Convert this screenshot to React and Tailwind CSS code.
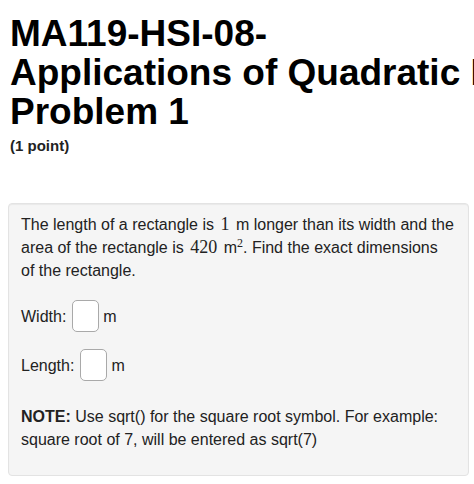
import React from 'react';

const sans = { fontFamily: '"Liberation Sans", Arial, sans-serif' };

function AnswerBox({ className = '' }) {
    return (
        <span className={`block w-[27px] h-[32px] bg-white border border-[#a9a9a9] rounded-[5px] ${className}`} />
    );
}

function MathNum({ children }) {
    return (
        <span className="font-['Liberation_Serif',serif] text-[18px] leading-[18px] mx-[2px]">{children}</span>
    );
}

export default function App() {
    return (
        <div className="w-[474px] h-[484px] overflow-hidden bg-white text-[#222]" style={sans}>
            <div className="pt-[14px] pl-[10px]">
                <h1 className="text-[37px] leading-[39px] font-bold text-black whitespace-nowrap">
                    <div>MA119-HSI-08-</div>
                    <div>Applications of Quadratic Equations</div>
                    <div>Problem 1</div>
                </h1>
                <div className="text-[15px] leading-[20px] font-bold mt-[5px]">(1 point)</div>
            </div>

            <div className="ml-[8px] mr-[5px] mt-[47px] bg-[#f5f5f5] border border-[#e3e3e3] rounded-[4px] shadow-[inset_0_1px_1px_rgba(0,0,0,0.05)] pl-[12px] pr-[4px] pt-[9px] pb-[24px] text-[16px] leading-[23px]">
                <p className="whitespace-nowrap">
                    The length of a rectangle is <MathNum>1</MathNum> m longer than its width and the
                    <br />
                    area of the rectangle is <MathNum>420</MathNum> m<sup className="font-['Liberation_Serif',serif] text-[12px]">2</sup>. Find the exact dimensions
                    <br />
                    of the rectangle.
                </p>

                <div className="flex items-center mt-[18px]">
                    <span>Width:</span>
                    <AnswerBox className="ml-[6px]" />
                    <span className="ml-[4px]">m</span>
                </div>

                <div className="flex items-center mt-[17px]">
                    <span>Length:</span>
                    <AnswerBox className="ml-[6px]" />
                    <span className="ml-[4px]">m</span>
                </div>

                <p className="mt-[24px] whitespace-nowrap">
                    <b>NOTE:</b> Use sqrt() for the square root symbol. For example:
                    <br />
                    square root of 7, will be entered as sqrt(7)
                </p>
            </div>
        </div>
    );
}
